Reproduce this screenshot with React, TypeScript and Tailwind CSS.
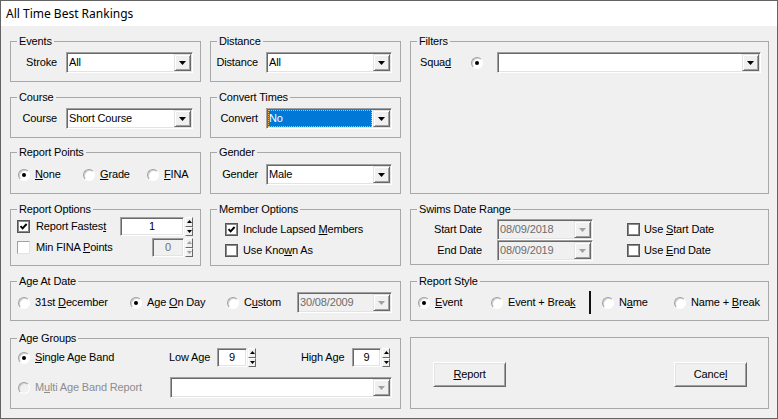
import type { ReactNode } from "react";

function Arrow({ color = "#000" }: { color?: string }) {
  return (
    <svg width="7" height="4" viewBox="0 0 7 4">
      <polygon points="0,0 7,0 3.5,4" fill={color} />
    </svg>
  );
}

function Combo({
  value = "",
  width,
  disabled,
  selected,
  white,
}: {
  value?: string;
  width: string;
  disabled?: boolean;
  selected?: boolean;
  white?: boolean;
}) {
  const bg = disabled && !white ? "bg-[#f0f0f0]" : "bg-white";
  return (
    <div
      className={`flex h-[21px] shrink-0 ${width} ${bg} border border-t-[#a0a0a0] border-l-[#a0a0a0] border-b-white border-r-white p-[1px] shadow-[inset_1px_1px_0_#696969,inset_-1px_-1px_0_#e3e3e3]`}
    >
      <div className="flex min-w-0 flex-1 items-center pr-[1px]">
        {selected ? (
          <span className="flex h-full w-full items-center bg-[#0078d7] pl-[1px] text-white outline-1 -outline-offset-1 outline-dotted outline-[#f2b25c]">
            {value}
          </span>
        ) : (
          <span className={`pl-[1px] ${disabled ? "text-[#6d6d6d]" : ""}`}>{value}</span>
        )}
      </div>
      <div className="flex h-[17px] w-[17px] items-center justify-center border border-t-[#e3e3e3] border-l-[#e3e3e3] border-b-[#696969] border-r-[#696969] bg-[#f0f0f0] shadow-[inset_1px_1px_0_#fff,inset_-1px_-1px_0_#a0a0a0]">
        <Arrow color={disabled ? "#a0a0a0" : "#000"} />
      </div>
    </div>
  );
}

function Radio({ checked, disabled }: { checked?: boolean; disabled?: boolean }) {
  return (
    <span
      className={`flex h-[12px] w-[12px] shrink-0 items-center justify-center rounded-full border border-t-[#a0a0a0] border-l-[#a0a0a0] border-b-white border-r-white shadow-[inset_1px_1px_0_#d0d0d0] ${disabled ? "bg-[#f0f0f0]" : "bg-white"}`}
    >
      {checked && <span className="h-[4px] w-[4px] rounded-full bg-black" />}
    </span>
  );
}

function Option({
  checked,
  disabled,
  className = "",
  children,
}: {
  checked?: boolean;
  disabled?: boolean;
  className?: string;
  children: ReactNode;
}) {
  return (
    <div className={`flex shrink-0 items-center ${className}`}>
      <Radio checked={checked} disabled={disabled} />
      <span className={`ml-[5px] whitespace-nowrap ${disabled ? "text-[#8d8d8d]" : ""}`}>{children}</span>
    </div>
  );
}

function Check({ checked, light }: { checked?: boolean; light?: boolean }) {
  return (
    <span
      className={`flex h-[13px] w-[13px] shrink-0 items-center justify-center bg-white ${
        light
          ? "border border-t-[#a0a0a0] border-l-[#a0a0a0] border-b-[#e3e3e3] border-r-[#e3e3e3]"
          : "border border-[#555555] shadow-[inset_0_0_0_1px_#8a8a8a]"
      }`}
    >
      {checked && (
        <svg width="9" height="9" viewBox="0 0 9 9">
          <path d="M1.5 4.2 L3.6 6.4 L7.6 2" fill="none" stroke="#000" strokeWidth="1.9" />
        </svg>
      )}
    </span>
  );
}

function SpinHalf({ up, disabled }: { up?: boolean; disabled?: boolean }) {
  return (
    <div className="flex flex-1 items-center justify-center border border-t-[#fff] border-l-[#fff] border-b-[#696969] border-r-[#696969] bg-[#f0f0f0]">
      <svg width="5" height="3" viewBox="0 0 5 3">
        <polygon points={up ? "0,3 5,3 2.5,0" : "0,0 5,0 2.5,3"} fill={disabled ? "#a0a0a0" : "#000"} />
      </svg>
    </div>
  );
}

function SpinEdit({ value, width, disabled }: { value: string; width: string; disabled?: boolean }) {
  return (
    <div className="flex shrink-0 items-center">
      <div
        className={`flex h-[19px] ${width} items-center justify-center border border-t-[#a0a0a0] border-l-[#a0a0a0] border-b-white border-r-white shadow-[inset_1px_1px_0_#696969,inset_-1px_-1px_0_#e3e3e3] ${
          disabled ? "bg-[#f0f0f0] text-[#6d6d6d]" : "bg-white"
        }`}
      >
        {value}
      </div>
      <div className="ml-[1px] flex h-[19px] w-[8px] flex-col">
        <SpinHalf up disabled={disabled} />
        <SpinHalf disabled={disabled} />
      </div>
    </div>
  );
}

function Group({ title, className = "", children }: { title: string; className?: string; children: ReactNode }) {
  return (
    <fieldset className={`min-w-0 self-start border border-[#a8a8a8] ${className}`}>
      <legend className="ml-[6px] px-[2px] leading-[13px]">{title}</legend>
      {children}
    </fieldset>
  );
}

function Button({ children }: { children: ReactNode }) {
  return (
    <div className="flex h-[25px] w-[73px] items-center justify-center border border-t-white border-l-white border-b-[#696969] border-r-[#696969] bg-[#f0f0f0] shadow-[inset_1px_1px_0_#e3e3e3,inset_-1px_-1px_0_#a0a0a0]">
      {children}
    </div>
  );
}

export default function App() {
  return (
    <div className="flex h-[419px] w-[778px] flex-col border border-[#646464] bg-[#f0f0f0] font-['Liberation_Sans',Arial,sans-serif] text-[11px] tracking-[-0.15px] text-black">
      <div className="flex h-[25px] shrink-0 items-center bg-white pl-[5px] font-['Noto_Sans',sans-serif] text-[12px] tracking-normal">
        All Time Best Rankings
      </div>

      <div className="grid grid-cols-[191px_191px_359px] grid-rows-[56px_55px_57px_72px_57px_77px] gap-x-[9px] pl-[9px] pt-[9px]">
        <Group title="Events" className="h-[47px]">
          <div className="mt-[4px] flex items-center">
            <span className="w-[46px] text-right">Stroke</span>
            <div className="ml-[9px]">
              <Combo value="All" width="w-[127px]" />
            </div>
          </div>
        </Group>

        <Group title="Distance" className="h-[47px]">
          <div className="mt-[4px] flex items-center">
            <span className="w-[47px] text-right">Distance</span>
            <div className="ml-[8px]">
              <Combo value="All" width="w-[126px]" />
            </div>
          </div>
        </Group>

        <Group title="Filters" className="row-span-3 h-[159px]">
          <div className="mt-[4px] flex items-center">
            <span className="ml-[9px] w-[51px]">
              Squa<u>d</u>
            </span>
            <Radio checked />
            <div className="ml-[14px]">
              <Combo width="w-[264px]" />
            </div>
          </div>
        </Group>

        <Group title="Course" className="h-[47px]">
          <div className="mt-[4px] flex items-center">
            <span className="w-[46px] text-right">Course</span>
            <div className="ml-[9px]">
              <Combo value="Short Course" width="w-[127px]" />
            </div>
          </div>
        </Group>

        <Group title="Convert Times" className="h-[47px]">
          <div className="mt-[4px] flex items-center">
            <span className="w-[47px] text-right">Convert</span>
            <div className="ml-[8px]">
              <Combo value="No" width="w-[126px]" selected />
            </div>
          </div>
        </Group>

        <Group title="Report Points" className="h-[48px]">
          <div className="mt-[5px] flex h-[21px] items-center pl-[7px]">
            <Option checked className="w-[65px]">
              <u>N</u>one
            </Option>
            <Option className="w-[64px]">
              <u>G</u>rade
            </Option>
            <Option>
              <u>F</u>INA
            </Option>
          </div>
        </Group>

        <Group title="Gender" className="h-[48px]">
          <div className="mt-[5px] flex items-center">
            <span className="w-[47px] text-right">Gender</span>
            <div className="ml-[8px]">
              <Combo value="Male" width="w-[126px]" />
            </div>
          </div>
        </Group>

        <Group title="Report Options" className="h-[63px]">
          <div className="flex h-[21px] items-center pl-[6px]">
            <Check checked />
            <span className="ml-[6px] w-[84px] whitespace-nowrap">
              Report Fastes<u>t</u>
            </span>
            <SpinEdit value="1" width="w-[64px]" />
          </div>
          <div className="flex h-[21px] items-center pl-[6px]">
            <Check light />
            <span className="ml-[6px] w-[116px] whitespace-nowrap">
              Min FINA <u>P</u>oints
            </span>
            <SpinEdit value="0" width="w-[32px]" disabled />
          </div>
        </Group>

        <Group title="Member Options" className="h-[63px]">
          <div className="mt-[3px] flex h-[21px] items-center pl-[14px]">
            <Check checked />
            <span className="ml-[5px] whitespace-nowrap">
              Include Lapsed <u>M</u>embers
            </span>
          </div>
          <div className="flex h-[21px] items-center pl-[14px]">
            <Check />
            <span className="ml-[5px] whitespace-nowrap">
              Use Kno<u>w</u>n As
            </span>
          </div>
        </Group>

        <Group title="Swims Date Range" className="h-[62px]">
          <div className="mt-[3px] flex h-[21px] items-center">
            <span className="w-[71px] text-right">Start Date</span>
            <div className="ml-[15px]">
              <Combo value="08/09/2018" width="w-[96px]" disabled />
            </div>
            <div className="ml-[34px]">
              <Check />
            </div>
            <span className="ml-[4px] whitespace-nowrap">
              Use <u>S</u>tart Date
            </span>
          </div>
          <div className="flex h-[21px] items-center">
            <span className="w-[71px] text-right">End Date</span>
            <div className="ml-[15px]">
              <Combo value="08/09/2019" width="w-[96px]" disabled />
            </div>
            <div className="ml-[34px]">
              <Check />
            </div>
            <span className="ml-[4px] whitespace-nowrap">
              Use <u>E</u>nd Date
            </span>
          </div>
        </Group>

        <Group title="Age At Date" className="col-span-2 h-[46px]">
          <div className="mt-[4px] flex h-[21px] items-center pl-[7px]">
            <Option className="w-[112px]">
              31st <u>D</u>ecember
            </Option>
            <Option checked className="w-[97px]">
              Age <u>O</u>n Day
            </Option>
            <Option className="w-[70px]">
              C<u>u</u>stom
            </Option>
            <Combo value="30/08/2009" width="w-[95px]" disabled />
          </div>
        </Group>

        <Group title="Report Style" className="h-[46px]">
          <div className="mt-[4px] flex h-[21px] items-center pl-[7px]">
            <Option checked className="w-[73px]">
              <u>E</u>vent
            </Option>
            <Option className="w-[98px]">
              Event + Brea<u>k</u>
            </Option>
            <span className="h-[23px] w-[2px] bg-[#111]" />
            <Option className="ml-[11px] w-[72px]">
              N<u>a</u>me
            </Option>
            <Option>
              Name + <u>B</u>reak
            </Option>
          </div>
        </Group>

        <Group title="Age Groups" className="col-span-2 h-[77px]">
          <div className="mt-[2px] flex h-[21px] items-center pl-[7px]">
            <Option checked className="w-[151px]">
              <u>S</u>ingle Age Band
            </Option>
            <span className="w-[48px] whitespace-nowrap">Low Age</span>
            <SpinEdit value="9" width="w-[30px]" />
            <span className="ml-[45px] w-[51px] whitespace-nowrap">High Age</span>
            <SpinEdit value="9" width="w-[29px]" />
          </div>
          <div className="mt-[9px] flex h-[21px] items-center pl-[7px]">
            <Option disabled className="w-[152px]">
              M<u>u</u>lti Age Band Report
            </Option>
            <Combo width="w-[222px]" disabled white />
          </div>
        </Group>

        <div className="mt-[5px] flex h-[72px] items-start justify-between border border-[#a8a8a8] pl-[22px] pr-[21px] pt-[24px]">
          <Button>
            <span>
              <u>R</u>eport
            </span>
          </Button>
          <Button>
            <span>
              Cance<u>l</u>
            </span>
          </Button>
        </div>
      </div>
    </div>
  );
}
